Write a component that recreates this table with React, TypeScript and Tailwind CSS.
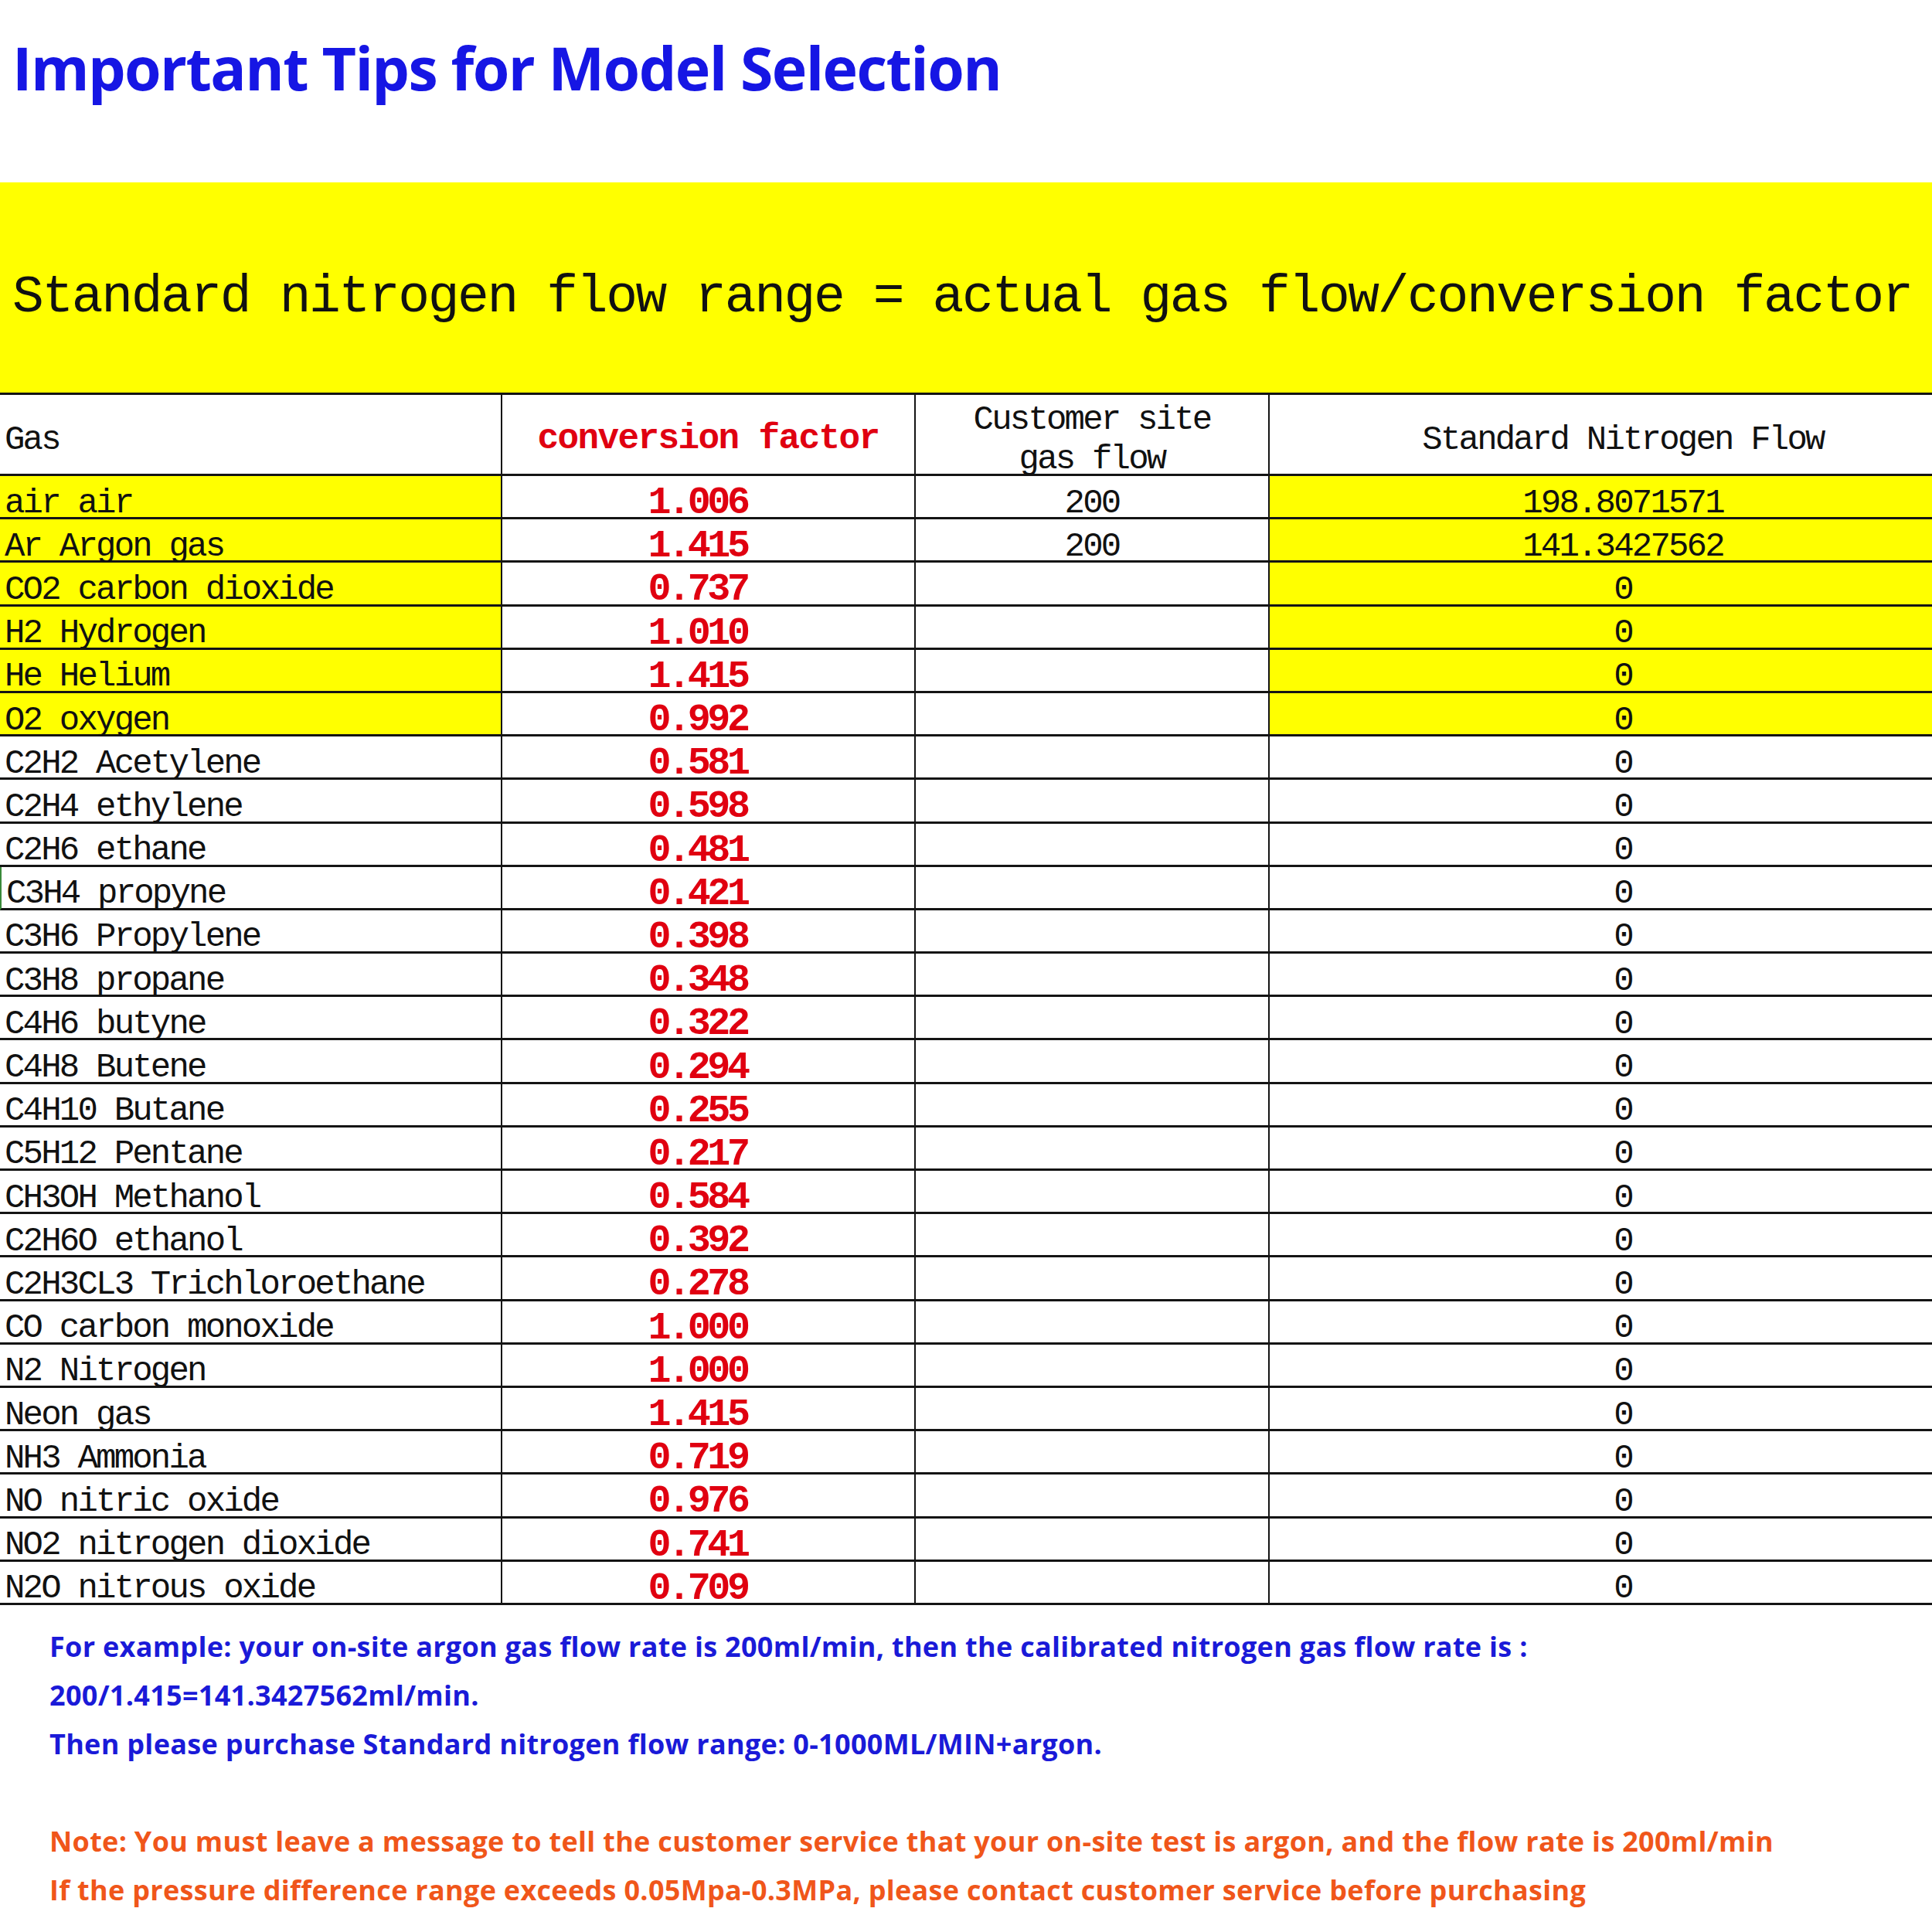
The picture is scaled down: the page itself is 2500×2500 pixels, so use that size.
import React from "react";

type Row = { gas: string; factor: string; site?: string; std: string; hl?: boolean; mark?: boolean };

const rows: Row[] = [
  { gas: "air air", factor: "1.006", site: "200", std: "198.8071571", hl: true },
  { gas: "Ar Argon gas", factor: "1.415", site: "200", std: "141.3427562", hl: true },
  { gas: "CO2 carbon dioxide", factor: "0.737", std: "0", hl: true },
  { gas: "H2 Hydrogen", factor: "1.010", std: "0", hl: true },
  { gas: "He Helium", factor: "1.415", std: "0", hl: true },
  { gas: "O2 oxygen", factor: "0.992", std: "0", hl: true },
  { gas: "C2H2 Acetylene", factor: "0.581", std: "0" },
  { gas: "C2H4 ethylene", factor: "0.598", std: "0" },
  { gas: "C2H6 ethane", factor: "0.481", std: "0" },
  { gas: "C3H4 propyne", factor: "0.421", std: "0", mark: true },
  { gas: "C3H6 Propylene", factor: "0.398", std: "0" },
  { gas: "C3H8 propane", factor: "0.348", std: "0" },
  { gas: "C4H6 butyne", factor: "0.322", std: "0" },
  { gas: "C4H8 Butene", factor: "0.294", std: "0" },
  { gas: "C4H10 Butane", factor: "0.255", std: "0" },
  { gas: "C5H12 Pentane", factor: "0.217", std: "0" },
  { gas: "CH3OH Methanol", factor: "0.584", std: "0" },
  { gas: "C2H6O ethanol", factor: "0.392", std: "0" },
  { gas: "C2H3CL3 Trichloroethane", factor: "0.278", std: "0" },
  { gas: "CO carbon monoxide", factor: "1.000", std: "0" },
  { gas: "N2 Nitrogen", factor: "1.000", std: "0" },
  { gas: "Neon gas", factor: "1.415", std: "0" },
  { gas: "NH3 Ammonia", factor: "0.719", std: "0" },
  { gas: "NO nitric oxide", factor: "0.976", std: "0" },
  { gas: "NO2 nitrogen dioxide", factor: "0.741", std: "0" },
  { gas: "N2O nitrous oxide", factor: "0.709", std: "0" },
];

const mono = "font-['Liberation_Mono',monospace]";
const cell = "flex items-center border-b-[3px] border-r-2 border-[#141414] h-[56.2px] pt-[16px]";
const head = "flex items-center border-b-[3px] border-r-2 border-[#141414] h-[105px] pt-[13px]";

export default function App() {
  return (
    <div className="w-[2500px] h-[2500px] overflow-hidden bg-white">
      <header className="h-[236px] pt-[49px] pl-[16px]">
        <h1 className="font-['Open_Sans',sans-serif] text-[77px] leading-none font-bold tracking-[-1.6px] text-[#1616e4]">
          Important Tips for Model Selection
        </h1>
      </header>

      <div className="h-[272px] bg-[#ffff00] flex items-center pl-[16px] pt-[26px]">
        <p className={`${mono} text-[68px] leading-none tracking-[-2.4px] text-[#111]`}>
          Standard nitrogen flow range = actual gas flow/conversion factor
        </p>
      </div>

      <div className="w-[2559px] border-t-[3px] border-[#141414]">
        <div className="grid grid-cols-[650px_535px_458px_916px]">
          <div className={`${head} pl-[6px] ${mono} text-[44px] tracking-[-2.8px] text-[#111]`}>Gas</div>
          <div className={`${head} justify-center ${mono} text-[46px] font-bold tracking-[-1.6px] text-[#e00010]`}>
            conversion factor
          </div>
          <div className={`${head} flex-col justify-center ${mono} text-[44px] leading-[51px] tracking-[-2.8px] text-[#111]`}>
            <span>Customer site</span>
            <span>gas flow</span>
          </div>
          <div className={`${head} justify-center ${mono} text-[44px] tracking-[-2.8px] text-[#111]`}>
            Standard Nitrogen Flow
          </div>
        </div>
        {rows.map((r) => (
          <div key={r.gas} className="grid grid-cols-[650px_535px_458px_916px]">
            <div
              className={`${cell} pl-[6px] ${r.mark ? "border-l-2 border-l-[#3a8a3a] pl-[4px]" : ""} ${r.hl ? "bg-[#ffff00]" : "bg-white"} ${mono} text-[44px] tracking-[-2.8px] text-[#111]`}
            >
              {r.gas}
            </div>
            <div className={`${cell} justify-center pr-[28px] ${mono} text-[50px] font-bold tracking-[-4.4px] text-[#e00010]`}>
              {r.factor}
            </div>
            <div className={`${cell} justify-center ${mono} text-[44px] tracking-[-2.8px] text-[#111]`}>
              {r.site ?? ""}
            </div>
            <div className={`${cell} justify-center ${r.hl ? "bg-[#ffff00]" : "bg-white"} ${mono} text-[44px] tracking-[-2.8px] text-[#111]`}>
              {r.std}
            </div>
          </div>
        ))}
      </div>

      <div className="pt-[22px] pl-[64px] font-['Open_Sans',sans-serif] font-bold text-[36px] leading-[63px] tracking-[0.3px]">
        <p className="text-[#1a1ad8]">
          For example: your on-site argon gas flow rate is 200ml/min, then the calibrated nitrogen gas flow rate is :
        </p>
        <p className="text-[#1a1ad8]">200/1.415=141.3427562ml/min.</p>
        <p className="text-[#1a1ad8]">Then please purchase Standard nitrogen flow range: 0-1000ML/MIN+argon.</p>
        <p className="h-[63px]" />
        <p className="text-[#f0561a]">
          Note: You must leave a message to tell the customer service that your on-site test is argon, and the flow rate is 200ml/min
        </p>
        <p className="text-[#f0561a]">
          If the pressure difference range exceeds 0.05Mpa-0.3MPa, please contact customer service before purchasing
        </p>
      </div>
    </div>
  );
}
